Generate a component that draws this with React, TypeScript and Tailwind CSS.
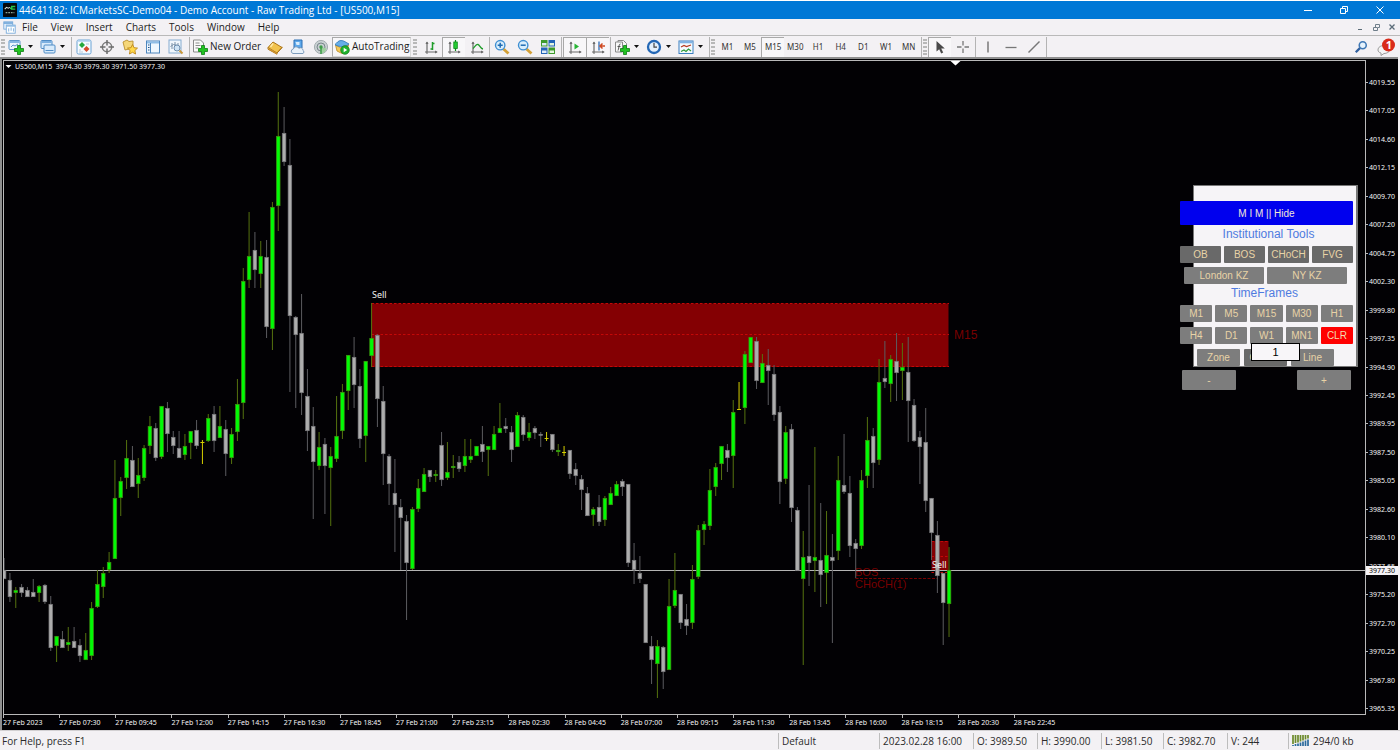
import React from "react";

type Kind = "g" | "w" | "y";
type Candle = [Kind, number, number, number, number];

/* kind, high, open/close top, open/close bottom, low */
const candles: Candle[] = [
  ["w", 558, 570, 579, 579], ["w", 573, 580, 597, 602], ["g", 587, 590, 593, 608], ["w", 584, 587, 593, 597],
  ["w", 587, 590, 597, 597], ["w", 579, 592, 597, 597], ["g", 585, 586, 593, 602], ["w", 584, 585, 602, 604],
  ["w", 596, 604, 648, 651], ["g", 636, 636, 646, 662], ["w", 631, 639, 648, 648], ["g", 627, 642, 645, 651],
  ["w", 627, 641, 648, 648], ["w", 639, 645, 656, 662], ["g", 633, 650, 660, 660], ["g", 602, 608, 656, 660],
  ["g", 570, 584, 607, 608], ["g", 567, 573, 587, 598], ["g", 552, 562, 570, 573], ["g", 460, 498, 559, 559],
  ["g", 477, 481, 498, 516], ["g", 440, 458, 478, 489], ["w", 446, 460, 487, 487], ["g", 458, 475, 484, 498],
  ["g", 445, 448, 478, 481], ["g", 416, 426, 446, 454], ["w", 423, 428, 458, 461], ["g", 406, 406, 457, 459],
  ["w", 402, 408, 434, 452], ["w", 431, 437, 446, 454], ["w", 431, 448, 458, 458], ["g", 434, 446, 455, 460],
  ["g", 431, 431, 443, 459], ["w", 420, 430, 446, 449], ["y", 440, 442, 443, 464], ["g", 414, 418, 441, 442],
  ["w", 406, 414, 441, 452], ["g", 406, 426, 438, 438], ["w", 420, 429, 454, 476], ["g", 428, 434, 458, 464],
  ["g", 379, 404, 432, 441], ["g", 268, 281, 403, 419], ["g", 212, 256, 280, 288], ["w", 232, 250, 270, 288],
  ["g", 241, 256, 274, 288], ["w", 240, 257, 327, 338], ["g", 202, 207, 329, 350], ["g", 92, 136, 206, 231],
  ["w", 107, 133, 162, 166], ["w", 139, 165, 316, 392], ["w", 316, 317, 335, 408], ["w", 294, 333, 393, 415],
  ["w", 369, 396, 431, 451], ["w", 407, 426, 462, 519], ["g", 432, 447, 466, 470], ["w", 438, 444, 466, 514],
  ["g", 447, 456, 468, 526], ["g", 396, 436, 459, 462], ["g", 384, 392, 431, 439], ["g", 355, 355, 391, 410],
  ["w", 337, 357, 385, 408], ["w", 369, 386, 439, 448], ["g", 361, 361, 436, 462], ["g", 303, 338, 356, 367],
  ["w", 334, 335, 399, 427], ["w", 386, 401, 454, 485], ["w", 454, 456, 484, 505], ["w", 459, 493, 505, 552],
  ["w", 499, 507, 518, 570], ["w", 515, 521, 563, 620], ["g", 507, 509, 569, 570], ["g", 479, 488, 509, 512],
  ["g", 468, 474, 492, 492], ["w", 470, 470, 477, 482], ["g", 470, 474, 476, 482], ["w", 432, 445, 480, 486],
  ["g", 442, 472, 478, 480], ["g", 455, 466, 468, 478], ["w", 456, 462, 469, 472], ["g", 439, 456, 466, 472],
  ["g", 439, 456, 460, 463], ["g", 446, 446, 456, 456], ["w", 426, 444, 452, 462], ["g", 446, 446, 450, 476],
  ["g", 426, 434, 450, 450], ["g", 403, 428, 433, 433], ["w", 418, 426, 429, 433], ["w", 426, 432, 450, 462],
  ["g", 412, 415, 447, 447], ["w", 415, 417, 435, 441], ["g", 423, 432, 438, 441], ["w", 426, 428, 433, 439],
  ["w", 432, 434, 435, 447], ["y", 432, 438, 439, 441], ["w", 434, 434, 450, 452], ["g", 444, 450, 452, 456],
  ["y", 446, 452, 453, 456], ["w", 450, 450, 474, 479], ["w", 463, 469, 476, 485], ["w", 475, 479, 490, 510],
  ["w", 487, 493, 516, 516], ["g", 507, 509, 515, 526], ["w", 495, 507, 522, 526], ["g", 496, 498, 520, 526],
  ["g", 487, 493, 505, 505], ["g", 481, 484, 496, 496], ["w", 479, 481, 487, 496], ["w", 484, 484, 563, 567],
  ["w", 543, 560, 570, 584], ["w", 556, 573, 579, 583], ["w", 584, 584, 643, 643], ["w", 636, 646, 660, 684],
  ["g", 640, 646, 664, 698], ["w", 646, 647, 672, 689], ["g", 579, 606, 670, 670], ["g", 553, 590, 606, 608],
  ["w", 594, 594, 623, 629], ["w", 604, 619, 626, 635], ["g", 565, 579, 623, 629], ["g", 525, 530, 577, 579],
  ["g", 521, 524, 530, 545], ["g", 469, 490, 526, 530], ["g", 463, 467, 487, 496], ["g", 446, 446, 464, 480],
  ["w", 444, 450, 458, 472], ["g", 400, 412, 456, 488], ["y", 382, 409, 410, 410], ["g", 351, 354, 408, 424],
  ["g", 337, 337, 363, 363], ["w", 337, 341, 381, 389], ["g", 354, 363, 383, 383], ["w", 349, 365, 371, 405],
  ["w", 365, 374, 415, 421], ["w", 406, 412, 482, 504], ["g", 426, 432, 479, 484], ["w", 424, 429, 508, 522],
  ["w", 507, 510, 571, 571], ["g", 531, 557, 579, 665], ["w", 485, 556, 563, 586], ["g", 447, 557, 561, 592],
  ["w", 503, 560, 575, 607], ["g", 511, 555, 573, 604], ["w", 534, 557, 561, 643], ["g", 456, 480, 551, 560],
  ["w", 434, 485, 492, 494], ["w", 476, 493, 546, 557], ["w", 539, 543, 549, 578], ["g", 470, 480, 546, 549],
  ["g", 417, 440, 476, 488], ["w", 428, 436, 463, 488], ["g", 359, 382, 460, 465], ["w", 341, 378, 382, 388],
  ["g", 355, 359, 384, 402], ["w", 333, 361, 373, 401], ["g", 343, 367, 371, 400], ["w", 337, 372, 401, 442],
  ["w", 399, 405, 441, 442], ["w", 431, 437, 447, 484], ["w", 408, 442, 501, 512], ["w", 498, 498, 533, 560],
  ["w", 521, 535, 576, 593], ["w", 573, 573, 603, 645], ["g", 547, 570, 604, 637],
];

const prices = [
  "4019.55", "4017.05", "4014.60", "4012.15", "4009.70", "4007.20", "4004.75", "4002.30", "3999.80", "3997.35",
  "3994.90", "3992.45", "3989.95", "3987.50", "3985.05", "3982.60", "3980.10", "3977.65", "3975.20", "3972.70",
  "3970.25", "3967.80", "3965.35",
];

const times = [
  "27 Feb 2023", "27 Feb 07:30", "27 Feb 09:45", "27 Feb 12:00", "27 Feb 14:15", "27 Feb 16:30", "27 Feb 18:45",
  "27 Feb 21:00", "27 Feb 23:15", "28 Feb 02:30", "28 Feb 04:45", "28 Feb 07:00", "28 Feb 09:15", "28 Feb 11:30",
  "28 Feb 13:45", "28 Feb 16:00", "28 Feb 18:15", "28 Feb 20:30", "28 Feb 22:45",
];

function Svg({ children, className = "size-4" }: { children: React.ReactNode; className?: string }) {
  return (
    <svg viewBox="0 0 16 16" className={`shrink-0 ${className}`} fill="none" aria-hidden="true">
      {children}
    </svg>
  );
}

const plus = (
  <path d="M9.5 6.5h3v3h3v3h-3v3h-3v-3h-3v-3h3z" fill="#22c322" stroke="#0b7d12" strokeWidth="0.8" />
);
const axes = (
  <>
    <path d="M4 3v10h10" stroke="#6b6b6b" strokeWidth="1.2" />
    <path d="M2.4 5 4 2.4 5.6 5zM12 11.4 14.8 13 12 14.6z" fill="#6b6b6b" />
    <path d="M2 13h2v2" stroke="#6b6b6b" />
  </>
);

const icons = {
  app: (
    <Svg className="size-[14px]">
      <rect width="16" height="16" rx="1" fill="#05090c" />
      <path d="M2 7l2-2 2 1 2-1" stroke="#d8e3dc" strokeWidth="1.2" />
      <path d="M8 6h2V4h4M9 7h5" stroke="#28c845" strokeWidth="1.6" />
      <path d="M3 11h10" stroke="#8da69a" strokeWidth="1.4" strokeDasharray="2 1" />
    </Svg>
  ),
  doc: (
    <Svg className="size-[13px]">
      <rect x="1" y="1" width="11" height="9" fill="#e9f3fd" stroke="#6fa5d8" />
      <path d="M1 2.5h11" stroke="#6fa5d8" strokeWidth="2" />
      <rect x="4" y="5" width="11" height="10" fill="#fff" stroke="#6fa5d8" />
      <path d="M4 6h11" stroke="#8fbce5" strokeWidth="2" />
      <path d="M7 9v4M10 8v4M13 9v4" stroke="#6fa5d8" />
    </Svg>
  ),
  newChart: (
    <Svg>
      <rect x="1" y="1.500" width="11" height="9" rx="1" fill="#eef6fd" stroke="#5b93c7" />
      <path d="M1.500 3h10" stroke="#86b5e0" strokeWidth="2" />
      <path d="M3 8l2-2 2 1 3-2" stroke="#5b93c7" />
      {plus}
    </Svg>
  ),
  profiles: (
    <Svg>
      <rect x="1" y="1.500" width="11" height="8" rx="1" fill="#d9ebfb" stroke="#4f8cc6" />
      <path d="M1.500 3h10" stroke="#7db0e0" strokeWidth="2" />
      <rect x="4" y="6" width="11" height="8" rx="1" fill="#d9ebfb" stroke="#4f8cc6" />
      <path d="M5.500 11.500h8" stroke="#4f8cc6" />
    </Svg>
  ),
  market: (
    <Svg>
      <rect x="1" y="1" width="14" height="14" rx="1.500" fill="#f6fbff" stroke="#6ba2d4" />
      <path d="M1.500 2h13" stroke="#a9cdec" strokeWidth="1.400" />
      <path d="M6 3 9 6 6 9 3 6z" fill="#27a83c" />
      <path d="M10.500 7 13.500 10l-3 3-3-3z" fill="#d84a2c" />
      <path d="M3 11h2M3 13h4M10 5h3" stroke="#b8c9d8" />
    </Svg>
  ),
  cross: (
    <Svg>
      <circle cx="8" cy="8" r="4.700" stroke="#7a7a7a" strokeWidth="1.500" />
      <path d="M8 1v5.500M8 9.500V15M1 8h5.500M9.500 8H15" stroke="#6d6d6d" strokeWidth="1.500" />
    </Svg>
  ),
  favorites: (
    <Svg>
      <path d="M1 3 5 1l2 1.500 4-.5v7l-8 2z" fill="#f5d779" stroke="#b9902f" strokeWidth="0.900" />
      <path d="m10.500 5.500 1.500 3.200 3.500.4-2.600 2.400.7 3.500-3.100-1.700L7.400 15l.7-3.500-2.600-2.400 3.500-.4z" fill="#ffd84a" stroke="#bd8717" strokeWidth="0.900" />
    </Svg>
  ),
  navigator: (
    <Svg>
      <rect x="1.500" y="2" width="13" height="12" fill="#eff7fe" stroke="#4d86bd" />
      <path d="M2 3.500h12" stroke="#8fbde6" strokeWidth="2" />
      <path d="M5.500 4v10" stroke="#4d86bd" />
      <path d="M3 6h1.500M3 8.500h1.500M3 11h1.500" stroke="#1d4f86" />
    </Svg>
  ),
  tester: (
    <Svg>
      <rect x="1" y="1" width="12" height="13" fill="#f1f7fc" stroke="#86acd0" />
      <path d="M4 4v6M7 3v5M10 4v4M2.500 7.500l3-2 4 1" stroke="#7b92a8" />
      <circle cx="9" cy="9" r="3" fill="#cfe4f5" stroke="#6d8eae" />
      <path d="m11.500 11.500 3 3" stroke="#c99838" strokeWidth="2" />
    </Svg>
  ),
  order: (
    <Svg>
      <path d="M1.500 1h7l3 3v9h-10z" fill="#fafafa" stroke="#8a8a8a" />
      <path d="M3.500 4h4M3.500 6.500h5M3.500 9h3" stroke="#8a8a8a" />
      {plus}
    </Svg>
  ),
  gold: (
    <Svg>
      <path d="M1 8.500 6 3l9 5.500-5 5.500z" fill="#f1c24d" stroke="#ad7416" />
      <path d="M1 8.500v1.700l9 5V14l5-5.500v-.700" stroke="#ad7416" />
      <path d="M1.500 9 10 14l-.1 1.200L1.500 10.500z" fill="#cf922a" />
      <path d="M6 4.500 3.500 8" stroke="#ffe9a8" strokeWidth="1.500" />
    </Svg>
  ),
  community: (
    <Svg>
      <path d="M4 1h8v8H4z" fill="#5ea8ea" stroke="#2a6eb4" />
      <path d="M5.500 3h4v3h-3z" fill="#d8ecfc" />
      <path d="M3 14.500a2.300 2.300 0 0 1 .3-4.500 3 3 0 0 1 5.500-.7A2.600 2.600 0 0 1 13 11.500a1.700 1.700 0 0 1 0 3z" fill="#e9f2fa" stroke="#7d9cbc" />
    </Svg>
  ),
  signals: (
    <Svg>
      <circle cx="8" cy="8" r="6.600" fill="#c9d0d2" stroke="#a5aeb1" />
      <circle cx="8" cy="8" r="4" stroke="#79868b" />
      <path d="M8 8v6.500a6.500 6.500 0 0 0 5.500-5" fill="#9fd09f" />
      <circle cx="8" cy="8" r="1.700" fill="#3c9c48" />
      <path d="M8 9v6" stroke="#3c9c48" strokeWidth="1.500" />
    </Svg>
  ),
  auto: (
    <Svg>
      <path d="M1.500 6 8 9.500 14.500 6 13 12l-5 2.500L3 12z" fill="#f4c95a" stroke="#b98a22" strokeWidth="0.800" />
      <path d="M1 5.500C3 4 4 1.500 7 1.500s5 2 8 3.500C12 8 5 8.500 1 5.500z" fill="#66aee8" stroke="#2e75b5" strokeWidth="0.800" />
      <circle cx="11" cy="11" r="4.300" fill="#20b32e" stroke="#0d7a18" strokeWidth="0.700" />
      <path d="M9.700 8.700 13.200 11l-3.500 2.300z" fill="#fff" />
    </Svg>
  ),
  bars: (
    <Svg>
      {axes}
      <path d="M9.500 3v8M9.500 4.500h2M7.500 10h2" stroke="#1f9c2a" strokeWidth="1.500" />
    </Svg>
  ),
  candle: (
    <Svg>
      {axes}
      <path d="M9.500 1v11" stroke="#0d8c1a" strokeWidth="1.200" />
      <rect x="7.800" y="3" width="3.500" height="6.500" fill="#25cc33" stroke="#0d8c1a" strokeWidth="0.800" />
    </Svg>
  ),
  line: (
    <Svg>
      {axes}
      <path d="M4 9.500C6.500 7 7 5 9 5.500s2 4 5 4.500" stroke="#1f9c2a" strokeWidth="1.300" />
    </Svg>
  ),
  zoomIn: (
    <Svg>
      <path d="m9.500 10 5 4.500" stroke="#d3a036" strokeWidth="2.800" />
      <circle cx="6.200" cy="6.200" r="4.700" fill="#d9eefc" stroke="#3f8fd2" strokeWidth="1.400" />
      <path d="M6.200 3.700v5M3.700 6.200h5" stroke="#1f6cb4" strokeWidth="1.500" />
    </Svg>
  ),
  zoomOut: (
    <Svg>
      <path d="m9.500 10 5 4.500" stroke="#d3a036" strokeWidth="2.800" />
      <circle cx="6.200" cy="6.200" r="4.700" fill="#d9eefc" stroke="#3f8fd2" strokeWidth="1.400" />
      <path d="M3.700 6.200h5" stroke="#1f6cb4" strokeWidth="1.500" />
    </Svg>
  ),
  tile: (
    <Svg>
      <rect x="1" y="1" width="6.500" height="6.500" fill="#3d9a2c" />
      <rect x="8.500" y="1" width="6.500" height="6.500" fill="#2565b8" />
      <rect x="1" y="8.500" width="6.500" height="6.500" fill="#2565b8" />
      <rect x="8.500" y="8.500" width="6.500" height="6.500" fill="#3d9a2c" />
      <path d="M2 4h4.500v2.500H2zM2 11.500h4.500V14H2z" fill="#dcebf8" />
      <path d="M9.500 4H14v2.500H9.500zM9.500 11.500H14V14H9.500z" fill="#e4f5df" />
    </Svg>
  ),
  shift: (
    <Svg>
      {axes}
      <path d="M7.500 4.500 12 7.500l-4.500 3z" fill="#27b535" />
    </Svg>
  ),
  scroll: (
    <Svg>
      {axes}
      <path d="M9 2.500v9" stroke="#2c6cb8" strokeWidth="1.300" />
      <path d="M10 7h5M12.500 4.500 10 7l2.500 2.500" stroke="#cf4a22" strokeWidth="1.500" />
    </Svg>
  ),
  indicators: (
    <Svg>
      <path d="M4 3V1.500h5.500l3 3V10" fill="#f8f8f8" stroke="#8a8a8a" />
      <path d="M1.500 3h7v10h-7z" fill="#f8f8f8" stroke="#8a8a8a" />
      <path d="M6.500 5C4.500 5 5.500 8 4 11.500M3.500 7.500h3" stroke="#555" />
      {plus}
    </Svg>
  ),
  clock: (
    <Svg>
      <circle cx="8" cy="8" r="6" fill="#e4f0fc" stroke="#2467b5" strokeWidth="2.300" />
      <path d="M8 4v4.200h3" stroke="#444" strokeWidth="1.200" />
    </Svg>
  ),
  template: (
    <Svg>
      <rect x="1" y="2" width="14" height="12.500" fill="#f5fbff" stroke="#3b7fc0" />
      <path d="M1.500 3.200h13" stroke="#7fb2e2" strokeWidth="2.200" />
      <path d="M3 8l3-1.500 2.500 1L13 6" stroke="#b83a20" strokeWidth="1.200" />
      <path d="M3 12.500 6 11l2 1.500 2.500-2.500L13 12" stroke="#2f9b38" strokeWidth="1.200" />
    </Svg>
  ),
  cursor: (
    <Svg>
      <path d="M4.500 2v10.500l2.700-2.300 2 4.300 2-1-2-4h3.600z" fill="#4a4a4a" />
    </Svg>
  ),
  crosshair: (
    <Svg>
      <path d="M8 2v4.500M8 9.500V14M2 8h4.500M9.500 8H14" stroke="#777" strokeWidth="1.300" />
    </Svg>
  ),
  vline: (
    <Svg>
      <path d="M8 2.500v11" stroke="#666" strokeWidth="1.300" />
    </Svg>
  ),
  hline: (
    <Svg>
      <path d="M2.500 8.500h11" stroke="#777" strokeWidth="1.300" />
    </Svg>
  ),
  trend: (
    <Svg>
      <path d="m2.500 13.500 11-11" stroke="#777" strokeWidth="1.500" />
    </Svg>
  ),
};

type IconName = keyof typeof icons;

function Tool({ icon, label, pressed = false }: { icon: IconName; label: string; pressed?: boolean }) {
  return (
    <button
      type="button"
      aria-label={label}
      aria-pressed={pressed}
      className={
        pressed
          ? "flex h-5 w-[23px] items-center justify-center border-t border-l border-[#a9a9a9] bg-[#f8f7f9]"
          : "flex h-5 w-[23px] items-center justify-center"
      }
    >
      {icons[icon]}
    </button>
  );
}

function DropTool({ icon, label }: { icon: IconName; label: string }) {
  return (
    <button type="button" aria-label={label} className="flex h-5 w-8 items-center gap-1 pl-[2px]">
      {icons[icon]}
      <svg viewBox="0 0 5 3" className="h-[3px] w-[5px]" aria-hidden="true">
        <path d="M0 0h5L2.500 3z" fill="#111" />
      </svg>
    </button>
  );
}

function Rule({ className }: { className: string }) {
  return (
    <span className={`flex h-5 shrink-0 items-stretch justify-center ${className}`}>
      <span className="w-px bg-[#b4b4b4]" />
    </span>
  );
}

function Grip() {
  return <span className="mx-px h-4 w-1 shrink-0 border-x-2 border-dotted border-[#b8b8b8]" />;
}

function TitleBar() {
  return (
    <header className="flex h-[19px] items-center border-t border-white bg-[#0078d6] text-white">
      <span className="flex w-[19px] justify-center">{icons.app}</span>
      <h1 className="text-[10px] leading-4">44641182: ICMarketsSC-Demo04 - Demo Account - Raw Trading Ltd - [US500,M15]</h1>
      <div className="ml-auto flex pr-[2px]">
        <button type="button" aria-label="Minimize" className="flex h-4 w-9 items-center justify-center">
          <span className="h-px w-2 bg-white" />
        </button>
        <button type="button" aria-label="Restore" className="flex h-4 w-9 items-center justify-center">
          <svg viewBox="0 0 8 8" className="size-2" fill="none" stroke="#fff" aria-hidden="true">
            <path d="M.5 2.500h5v5h-5zM2.500 2V.5h5v5H6" />
          </svg>
        </button>
        <button type="button" aria-label="Close" className="flex h-4 w-9 items-center justify-center">
          <svg viewBox="0 0 8 8" className="size-2" stroke="#fff" aria-hidden="true">
            <path d="m.5.500 7 7M7.500.500l-7 7" />
          </svg>
        </button>
      </div>
    </header>
  );
}

function MenuBar() {
  return (
    <nav aria-label="Main menu" className="flex h-[17px] items-center border-b border-[#b9b9b9] text-[10px] leading-4 text-[#1c1c1c]">
      <span className="flex w-[22px] justify-center pr-1">{icons.doc}</span>
      <div className="flex flex-1 gap-[13px]">
        {["File", "View", "Insert", "Charts", "Tools", "Window", "Help"].map((m) => (
          <button key={m} type="button">{m}</button>
        ))}
      </div>
      <button type="button" aria-label="Minimize chart" className="flex h-4 w-4 items-center justify-center">
        <span className="mt-1 h-px w-1 bg-[#5b6c78]" />
      </button>
      <button type="button" aria-label="Restore chart" className="flex h-4 w-4 items-center justify-center">
        <svg viewBox="0 0 7 7" className="size-[7px]" fill="none" stroke="#6f7e8a" aria-hidden="true">
          <path d="M.5 3.500h4v3h-4zM2.500 3V.5h4v3H5" />
        </svg>
      </button>
      <button type="button" aria-label="Close chart" className="flex h-4 w-4 items-center justify-center">
        <svg viewBox="0 0 6 6" className="size-[6px]" stroke="#5b6c78" strokeWidth="1.300" aria-hidden="true">
          <path d="m.5.500 5 5M5.500.500l-5 5" />
        </svg>
      </button>
    </nav>
  );
}

function ToolBar() {
  return (
    <div role="toolbar" aria-label="Tools" className="flex h-[21px] items-center text-[#1c1c1c]">
      <Grip />
      <DropTool icon="newChart" label="New chart" />
      <DropTool icon="profiles" label="Profiles" />
      <Rule className="w-[2px]" />
      <Tool icon="market" label="Market Watch" />
      <Tool icon="cross" label="Data Window" />
      <Tool icon="favorites" label="Navigator" />
      <Tool icon="navigator" label="Terminal" />
      <Tool icon="tester" label="Strategy Tester" />
      <Rule className="w-[4px]" />
      <button type="button" className="flex h-5 w-[72px] items-center gap-[2px] pl-px text-[10px] whitespace-nowrap">
        {icons.order}
        New Order
      </button>
      <Tool icon="gold" label="MetaEditor" />
      <Tool icon="community" label="Community" />
      <Tool icon="signals" label="Signals" />
      <button
        type="button"
        aria-pressed="true"
        className="flex h-5 w-[79px] items-center gap-[2px] border border-r-[#d8d8d8] border-b-[#d8d8d8] border-t-[#a9a9a9] border-l-[#a9a9a9] bg-[#f8f7f9] pl-px text-[10px] whitespace-nowrap"
      >
        {icons.auto}
        AutoTrading
      </button>
      <span className="flex w-2 justify-center"><Grip /></span>
      <Tool icon="bars" label="Bar chart" />
      <Tool icon="candle" label="Candlesticks" pressed />
      <Tool icon="line" label="Line chart" />
      <Rule className="w-[2px]" />
      <Tool icon="zoomIn" label="Zoom in" />
      <Tool icon="zoomOut" label="Zoom out" />
      <Tool icon="tile" label="Tile windows" />
      <Rule className="w-[4px]" />
      <Tool icon="shift" label="Auto scroll" pressed />
      <Tool icon="scroll" label="Chart shift" pressed />
      <Rule className="w-[3px]" />
      <DropTool icon="indicators" label="Indicators" />
      <DropTool icon="clock" label="Periods" />
      <DropTool icon="template" label="Templates" />
      <Rule className="w-[2px]" />
      <Grip />
      <div className="grid w-[204px] grid-cols-9 font-['Noto_Sans'] text-[8px] text-[#333]">
        {["M1", "M5", "M15", "M30", "H1", "H4", "D1", "W1", "MN"].map((t) => (
          <button
            key={t}
            type="button"
            aria-pressed={t === "M15"}
            className={t === "M15" ? "h-5 border-t border-l border-[#a9a9a9] bg-[#f8f7f9]" : "h-5"}
          >
            {t}
          </button>
        ))}
      </div>
      <Rule className="w-[2px]" />
      <Grip />
      <Tool icon="cursor" label="Cursor" pressed />
      <Tool icon="crosshair" label="Crosshair" />
      <Rule className="w-[2px]" />
      <Tool icon="vline" label="Vertical line" />
      <Tool icon="hline" label="Horizontal line" />
      <Tool icon="trend" label="Trendline" />
      <Rule className="w-[2px]" />
      <div className="ml-auto flex items-center gap-2 pr-1">
        <button type="button" aria-label="Search">
          <Svg className="size-[14px]">
            <path d="m7 9-5 5" stroke="#2f5f9e" strokeWidth="2.600" />
            <circle cx="10" cy="6" r="4" fill="#e6f3fd" stroke="#3f78b5" strokeWidth="1.800" />
          </Svg>
        </button>
        <button type="button" aria-label="1 notification" className="relative h-5 w-5">
          <svg viewBox="0 0 20 20" className="size-5" aria-hidden="true">
            <path d="M2 13c0-3 3-4.500 6-4.500s6 2 6 4-3 4-6 4l-3 2v-2.500c-2-.5-3-1.500-3-3z" fill="#f5f5f5" stroke="#9a9a9a" />
            <circle cx="12.500" cy="8" r="6.500" fill="#d92b1a" />
          </svg>
          <span className="absolute top-0 left-[9px] w-2 text-center text-[11px] leading-4 font-bold text-white">1</span>
        </button>
      </div>
    </div>
  );
}

function CandleMark({ c, i }: { c: Candle; i: number }) {
  const [kind, high, top, bottom, low] = c;
  const x = 4.100 + i * 5.833;
  if (kind === "y") {
    return <path d={`M${x} ${high}V${low}M${x - 2} ${top + 0.5}h4`} stroke="#d6cf00" />;
  }
  const green = kind === "g";
  return (
    <>
      <path d={`M${x} ${high}V${low}`} stroke={green ? "#56730f" : "#5c5c60"} />
      <rect
        x={x - 1.800}
        y={top + 0.3}
        width={3.600}
        height={Math.max(bottom - top - 0.6, 1)}
        fill={green ? "#00fb05" : "#adadad"}
        stroke={green ? "#3f8f10" : "#77777a"}
        strokeWidth="0.700"
      />
    </>
  );
}

function Plot() {
  return (
    <svg className="absolute inset-0 size-full" role="img" aria-label="US500 M15 candlestick chart">
      <g transform="translate(-4 -61)">
        <path d="M950.500 61h10l-5 4.500z" fill="#fff" />
        <path d="M5.500 65h6l-3 3z" fill="#fff" />
        <rect x="371.500" y="303.500" width="577" height="63.500" fill="#840003" />
        <path d="M371.500 303.500H949M371.500 334.500H949M371.500 366.500H949" stroke="#c40808" strokeDasharray="2.500 2" />
        <rect x="931.500" y="541" width="17" height="30" fill="#840003" />
        <path d="M931.500 541.500h17M931.500 556.500h17M931.500 572.500h17" stroke="#c40808" strokeDasharray="2.500 2" />
        <path d="M855.500 578.500H938" stroke="#7a0000" strokeDasharray="3 1.500" />
        <g fill="#780000" className="font-['Liberation_Sans'] text-[11px]">
          <text x="954" y="339" className="text-[12px]">M15</text>
          <text x="855" y="576">BOS</text>
          <text x="855" y="588">CHoCH(1)</text>
        </g>
        <path d="M4 570.500h3000" stroke="#b4b4b4" />
        {candles.map((c, i) => (
          <CandleMark key={i} c={c} i={i} />
        ))}
        <g fill="#f0f0f0" className="text-[9px]">
          <text x="372" y="298">Sell</text>
          <text x="932" y="568">Sell</text>
        </g>
      </g>
    </svg>
  );
}

const key = "h-[17px] rounded-[1px] bg-[#7d7d7d] text-[10px] leading-[17px] text-[#e8d3a6]";
const darkKey = "h-[17px] rounded-[1px] bg-[#696969] text-[10px] leading-[17px] text-[#e8d3a6]";

function ControlPanel() {
  return (
    <section
      aria-label="Institutional tools"
      className="absolute top-[124px] right-3 w-[173px] font-['Liberation_Sans',sans-serif]"
    >
      <div className="absolute top-0 -right-[5px] left-[13px] h-[182px] border border-r-2 border-[#777] bg-[#f6f4f7]" />
      <div className="relative flex flex-col pt-4">
        <button type="button" className="h-6 rounded-[1px] bg-[#0000ee] text-[10px] text-[#f0e6d6]">M I M || Hide</button>
        <h2 className="pb-[2px] pl-1 text-center text-[12px] leading-[19px] text-[#4f7be0]">Institutional Tools</h2>
        <div className="flex gap-[3px]">
          {["OB", "BOS", "CHoCH", "FVG"].map((t) => (
            <button key={t} type="button" className={`${darkKey} w-[41px]`}>{t}</button>
          ))}
        </div>
        <div className="flex gap-[3px] pt-1 pl-1">
          {["London KZ", "NY KZ"].map((t) => (
            <button key={t} type="button" className={`${key} w-20`}>{t}</button>
          ))}
        </div>
        <h2 className="pr-1 pb-[2px] text-center text-[12px] leading-[19px] text-[#4f7be0]">TimeFrames</h2>
        <div className="grid grid-cols-5 gap-x-[3px] gap-y-[5px]">
          {["M1", "M5", "M15", "M30", "H1", "H4", "D1", "W1", "MN1"].map((t) => (
            <button key={t} type="button" className={key}>{t}</button>
          ))}
          <button type="button" className="h-[17px] rounded-[1px] bg-[#ff0000] text-[10px] leading-[17px] text-[#f3dcb0]">CLR</button>
        </div>
        <div className="relative flex gap-1 pt-[5px] pl-[17px]">
          <button type="button" className={`${key} w-[43px]`}>Zone</button>
          <button type="button" className={`${darkKey} w-[43px]`}>Combo</button>
          <button type="button" className={`${key} w-[43px]`}>Line</button>
          <input
            type="text"
            aria-label="Value"
            defaultValue="1"
            className="absolute -top-px left-[71px] h-[18px] w-[49px] border border-black bg-[#f8f6f9] text-center text-[11px] text-black"
          />
        </div>
        <div className="flex justify-between px-[2px] pt-1">
          <button type="button" className="h-5 w-[54px] rounded-[1px] bg-[#7d7d7d] text-[10px] text-[#e8d3a6]">-</button>
          <button type="button" className="h-5 w-[54px] rounded-[1px] bg-[#7d7d7d] text-[10px] text-[#e8d3a6]">+</button>
        </div>
      </div>
    </section>
  );
}

function Chart() {
  return (
    <main className="mr-[2px] flex flex-1 flex-col border-t-2 border-l-2 border-[#8f8f8f] bg-[#020104] pt-px pl-px font-['Noto_Sans'] text-[7px] leading-[9px] text-[#f4f4f4]">
      <div className="flex flex-1">
        <div className="relative min-w-0 flex-1 border border-[#b9b9b9]">
          <Plot />
          <p className="relative pt-px pl-[11px] whitespace-pre">US500,M15  3974.30 3979.30 3971.50 3977.30</p>
          <ControlPanel />
        </div>
        <div className="relative w-8">
          <ol className="flex h-full flex-col justify-between pt-[18px] pb-[2px]">
            {prices.map((p) => (
              <li key={p} className="flex items-center gap-px">
                <span className="h-px w-[2px] bg-[#b9b9b9]" />
                {p}
              </li>
            ))}
          </ol>
          <span className="absolute top-[506px] right-0 left-0 bg-[#f4f2f5] pl-[3px] text-black">3977.30</span>
        </div>
      </div>
      <ol className="grid h-[15px] w-[1067px] grid-cols-[repeat(19,1fr)] whitespace-nowrap">
        {times.map((t) => (
          <li key={t} className="flex flex-col">
            <span className="h-[3px] w-px bg-[#b9b9b9]" />
            {t}
          </li>
        ))}
      </ol>
    </main>
  );
}

function StatusBar() {
  const cell = "border-l border-[#bdbdbd] pl-[3px] whitespace-nowrap";
  return (
    <footer className="flex h-5 items-center border-t border-[#d2d0d2] text-[10px] leading-4 text-[#2b2b2b]">
      <span className="flex-1 pl-[2px]">For Help, press F1</span>
      <span className={`${cell} w-[101px]`}>Default</span>
      <span className={`${cell} w-[94px]`}>2023.02.28 16:00</span>
      <span className={`${cell} w-16`}>O: 3989.50</span>
      <span className={`${cell} w-16`}>H: 3990.00</span>
      <span className={`${cell} w-[62px]`}>L: 3981.50</span>
      <span className={`${cell} w-16`}>C: 3982.70</span>
      <span className={`${cell} w-[61px]`}>V: 244</span>
      <span className={`${cell} flex w-28 items-center gap-[3px]`}>
        <svg viewBox="0 0 18 11" className="h-[11px] w-[18px]" aria-hidden="true">
          <path d="M1 0v9M3.500 0v8M6 0v7.500M8.500 0v6.500M11 0v5.500M13.500 0v4.500M16 0v3.500" stroke="#6b8a2a" strokeWidth="1.700" />
          <path d="M1 10v1M3.500 9v2M6 8.500V11M8.500 7.500V11M11 6.500V11M13.500 5.500V11M16 4.500V11" stroke="#2a6a9c" strokeWidth="1.700" />
        </svg>
        294/0 kb
      </span>
    </footer>
  );
}

export default function App() {
  return (
    <div className="flex min-h-screen flex-col bg-[#f3f1f4] font-['Open_Sans','Noto_Sans',sans-serif]">
      <TitleBar />
      <MenuBar />
      <ToolBar />
      <Chart />
      <StatusBar />
    </div>
  );
}
